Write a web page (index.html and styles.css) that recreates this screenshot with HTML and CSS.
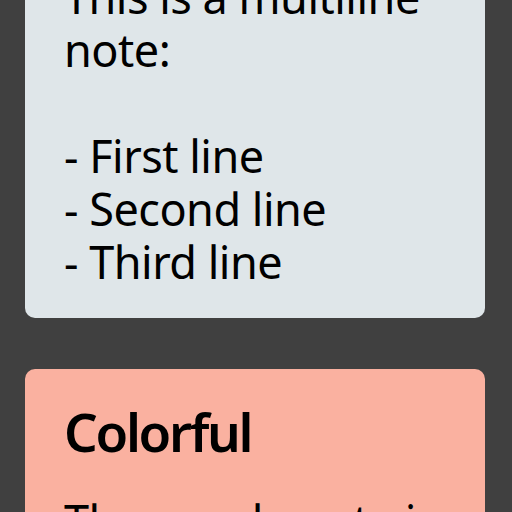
FILE: index.html
```html
<!DOCTYPE html>
<html>
<head>
<meta charset="utf-8">
<link rel="stylesheet" href="styles.css">
</head>
<body>
<main class="notes">
  <section class="note note-gray">
    <p class="note-body">This is a multiline note:

- First line
- Second line
- Third line</p>
  </section>
  <section class="note note-salmon">
    <h2 class="note-title">Colorful</h2>
    <p class="note-body">The purple note is colorful</p>
  </section>
</main>
</body>
</html>
```
FILE: styles.css
```css
html, body {
  margin: 0;
  padding: 0;
  background: #404040;
}
body {
  font-family: "Noto Sans", "Open Sans", sans-serif;
  color: #000;
  overflow: hidden;
}
.notes {
  display: flex;
  flex-direction: column;
  gap: 51px;
  padding: 0 27px 0 25px;
  margin-top: -70px;
}
.note {
  border-radius: 10px;
  padding: 40px 40px 30px 39px;
}
.note-gray { background: #dfe6e9; }
.note-salmon { background: #fab1a0; padding-top: 31px; }
.note-body {
  margin: 0;
  white-space: pre-wrap;
  font-size: 45px;
  letter-spacing: -0.5px;
  line-height: 53px;
}
.note-title {
  margin: 0 0 30px 0;
  font-size: 53px;
  line-height: 64px;
  font-weight: 600;
  letter-spacing: -2.3px;
}
```
